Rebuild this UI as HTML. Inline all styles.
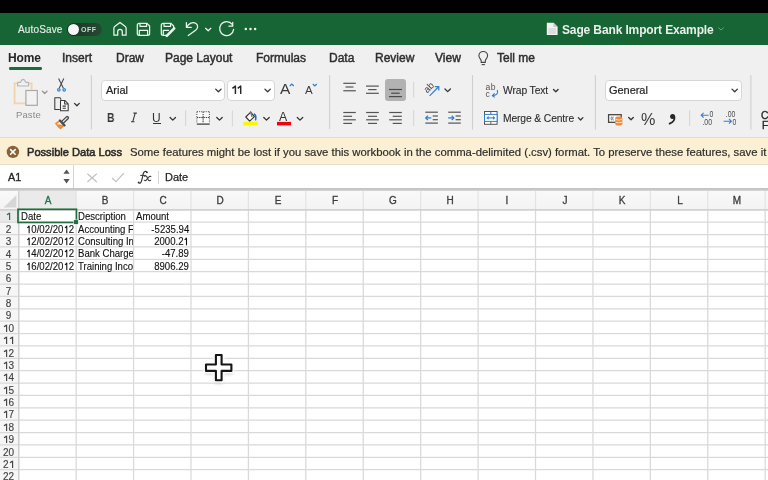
<!DOCTYPE html><html><head><meta charset="utf-8"><style>
*{margin:0;padding:0;box-sizing:border-box}
html,body{width:768px;height:480px;overflow:hidden;background:#fff;font-family:"Liberation Sans", sans-serif}
.a{position:absolute}
.t{position:absolute;white-space:nowrap;line-height:1;will-change:transform}
svg{position:absolute;overflow:visible}
</style></head><body>
<div class="a" style="left:0px;top:0px;width:768px;height:13px;background:#000;"></div><div class="a" style="left:0px;top:13px;width:768px;height:32px;background:#176534;"></div><div class="t" style="left:18.00px;top:24.93px;font-size:10px;color:#e4ece6;font-weight:400;letter-spacing:0.15px;-webkit-text-stroke:0.15px #e4ece6">AutoSave</div><div class="a" style="left:67px;top:23px;width:35px;height:12.5px;border-radius:6.5px;background:linear-gradient(90deg,#1a3324,#244a33)"></div><div class="a" style="left:67.7px;top:23.8px;width:11px;height:11px;border-radius:50%;background:#f6f6f6;box-shadow:0 0.5px 1px rgba(0,0,0,.4)"></div><div class="t" style="left:81.20px;top:25.77px;font-size:7px;color:#cfd8d2;font-weight:700;letter-spacing:0.5px;">OFF</div><svg width="768" height="480" style="left:0;top:0" viewBox="0 0 768 480"><g fill="none" stroke="#eef3ef" stroke-width="1.25" stroke-linejoin="round" stroke-linecap="round">
<path d="M113.9,35.2 V28.2 Q113.9,27.2 114.7,26.5 L120,22.4 L125.3,26.5 Q126.1,27.2 126.1,28.2 V35.2 H122.3 V31.6 A2.3,2.3 0 0 0 117.7,31.6 V35.2 Z"/>
<path d="M139.2,23.4 H147 L149.6,26 V33.4 Q149.6,35.3 147.7,35.3 H139.2 Q137.3,35.3 137.3,33.4 V25.3 Q137.3,23.4 139.2,23.4 Z"/>
<path d="M140,23.6 V26.3 H146.6 V23.6"/>
<path d="M139.3,35.2 V30.4 H147.6 V35.2"/>
<path d="M163.2,23.4 H171 L173.6,26 V27.5 M167,35.3 H163.2 Q161.3,35.3 161.3,33.4 V25.3 Q161.3,23.4 163.2,23.4"/>
<path d="M164,23.6 V26.3 H170.6 V23.6"/>
<path d="M163.3,35.2 V30.4 H168.5"/>
<path d="M186.4,22.6 V27.4 H191.2"/>
<path d="M186.6,27.3 C188.5,23.3 193,21.6 196,23.6 C198.6,25.6 197.8,28.4 195.6,30.2 L188.3,35.6"/>
<path d="M205.6,28.3 L208.2,30.8 L210.8,28.3"/>
<path d="M232.2,24.4 A7,7 0 1 0 233.6,29.4"/>
<path d="M232.7,22.3 V26.2 H228.9"/>
</g>
<path d="M166.8,35.8 L174.2,28.4" stroke="#eef3ef" stroke-width="2.6" stroke-linecap="round"/>
<g fill="#eef3ef"><circle cx="245.8" cy="29.1" r="1.25"/><circle cx="250.5" cy="29.1" r="1.25"/><circle cx="255.1" cy="29.1" r="1.25"/></g>
</svg><svg width="768" height="480" style="left:0;top:0" viewBox="0 0 768 480"><path d="M546.8,22.8 H553.6 L557.6,26.8 V35 H546.8 Z" fill="#f2f2f2"/><path d="M553.4,22.8 V27 H557.6" fill="#c9c9c9"/>
<g stroke="#b0b0b0" stroke-width="0.6"><path d="M548.5,29 H556 M548.5,31 H556 M548.5,33 H556"/></g>
<path d="M718.3,27.6 L721,30 L723.7,27.6" fill="none" stroke="#6f9c7d" stroke-width="1"/></svg><div class="t" style="left:562.20px;top:23.84px;font-size:12px;color:#eaf0ec;font-weight:700;letter-spacing:-0.13px;">Sage Bank Import Example</div><div class="a" style="left:0px;top:45px;width:768px;height:92px;background:#f0f0f0;"></div><div class="t" style="left:8.30px;top:51.54px;font-size:12px;color:#262626;font-weight:700;letter-spacing:-0.1px;">Home</div><div class="t" style="left:61.80px;top:51.54px;font-size:12px;color:#2e2e2e;font-weight:400;letter-spacing:0px;-webkit-text-stroke:0.45px #2e2e2e">Insert</div><div class="t" style="left:115.70px;top:51.54px;font-size:12px;color:#2e2e2e;font-weight:400;letter-spacing:0px;-webkit-text-stroke:0.45px #2e2e2e">Draw</div><div class="t" style="left:165.10px;top:51.54px;font-size:12px;color:#2e2e2e;font-weight:400;letter-spacing:0px;-webkit-text-stroke:0.45px #2e2e2e">Page Layout</div><div class="t" style="left:255.60px;top:51.54px;font-size:12px;color:#2e2e2e;font-weight:400;letter-spacing:0px;-webkit-text-stroke:0.45px #2e2e2e">Formulas</div><div class="t" style="left:328.70px;top:51.54px;font-size:12px;color:#2e2e2e;font-weight:400;letter-spacing:0px;-webkit-text-stroke:0.45px #2e2e2e">Data</div><div class="t" style="left:374.70px;top:51.54px;font-size:12px;color:#2e2e2e;font-weight:400;letter-spacing:0px;-webkit-text-stroke:0.45px #2e2e2e">Review</div><div class="t" style="left:435.30px;top:51.54px;font-size:12px;color:#2e2e2e;font-weight:400;letter-spacing:0px;-webkit-text-stroke:0.45px #2e2e2e">View</div><div class="t" style="left:496.60px;top:51.54px;font-size:12px;color:#2e2e2e;font-weight:400;letter-spacing:0px;-webkit-text-stroke:0.45px #2e2e2e">Tell me</div><div class="a" style="left:9px;top:67px;width:33px;height:2.6px;background:#1d6b3a;border-radius:1.3px"></div><svg width="768" height="480" style="left:0;top:0" viewBox="0 0 768 480"><g fill="none" stroke="#444" stroke-width="1.1"><path d="M481.2,62.4 V60.8 C481.2,59.2 478.9,58.2 478.9,55.8 A4.35,4.35 0 0 1 487.6,55.8 C487.6,58.2 485.3,59.2 485.3,60.8 V62.4 Z"/><path d="M481.6,64.6 H484.9"/></g></svg><svg width="768" height="480" style="left:0;top:0" viewBox="0 0 768 480"><path d="M91.4,75 V129.2" stroke="#cfcfcf" stroke-width="1.1"/><path d="M329.6,75 V129" stroke="#cfcfcf" stroke-width="1.1"/><path d="M472.5,75 V129.6" stroke="#cfcfcf" stroke-width="1.1"/><path d="M595.4,75 V129.5" stroke="#cfcfcf" stroke-width="1.1"/><path d="M750.9,75 V129.4" stroke="#cfcfcf" stroke-width="1.1"/></svg><svg width="768" height="480" style="left:0;top:0" viewBox="0 0 768 480"><path d="M185.6,110.3 V126.1" stroke="#d6d6d6" stroke-width="1.1"/><path d="M232.4,110.3 V126.2" stroke="#d6d6d6" stroke-width="1.1"/><path d="M413.6,81.8 V97.4" stroke="#d6d6d6" stroke-width="1.1"/><path d="M413.6,110.3 V126" stroke="#d6d6d6" stroke-width="1.1"/><path d="M689.6,110.3 V126" stroke="#d6d6d6" stroke-width="1.1"/></svg><svg width="768" height="480" style="left:0;top:0" viewBox="0 0 768 480"><g fill="none">
<path d="M17.4,83.4 H14.6 V103.4 H25.5" stroke="#f6d3a6" stroke-width="1.8"/>
<path d="M28.8,83.4 H31.6 V89.6" stroke="#f6d3a6" stroke-width="1.8"/>
<path d="M17.6,86 V82.8 Q17.6,82.4 18.2,82.4 H20.4 Q21.6,79.4 23.1,79.4 Q24.6,79.4 25.8,82.4 H28 Q28.6,82.4 28.6,82.8 V86 Z" stroke="#b5b5b5" stroke-width="1.1" fill="#efefef"/>
<rect x="25.9" y="90.5" width="11.4" height="14.8" stroke="#a8a8a8" stroke-width="1.2" fill="#f2f2f2"/>
<path d="M42.4,91.2 L44.7,93.4 L47,91.2" stroke="#999" stroke-width="1.4" stroke-linecap="round" stroke-linejoin="round"/>
</g></svg><div class="t" style="left:16.20px;top:110.36px;font-size:9.5px;color:#8a8a8a;font-weight:400;letter-spacing:0.1px;">Paste</div><svg width="768" height="480" style="left:0;top:0" viewBox="0 0 768 480"><g fill="none" stroke-width="1.05">
<path d="M58.6,78.6 L63.4,88.2 M63.8,78.6 L59.2,88.2" stroke="#444"/>
</g>
<circle cx="58.8" cy="89.8" r="1.9" fill="#3a8ad6"/><circle cx="64.2" cy="89.8" r="1.9" fill="#3a8ad6"/>
<circle cx="58.8" cy="89.8" r="0.6" fill="#dfeefa"/><circle cx="64.2" cy="89.8" r="0.6" fill="#dfeefa"/>
<g fill="none" stroke="#3a3a3a" stroke-width="1.05" stroke-linejoin="round">
<path d="M59.8,109.4 H54.8 V97.8 H59.6 Q60.8,97.8 60.8,99 V99.8"/>
<path d="M60.5,100.4 H64.8 L68.2,103.8 V110.8 H60.5 Z" fill="#f7f7f7"/>
<path d="M64.6,100.6 V104 H68"/>
<path d="M62.6,106.1 H65.9 M62.6,108.3 H65.9"/>
</g>
<path d="M74.5,103.4 L76.9,105.8 L79.3,103.4" fill="none" stroke="#333" stroke-width="1.3" stroke-linecap="round" stroke-linejoin="round"/>
<path d="M60.4,119.6 L65.4,124.8 L60.6,129.6 Q57.2,127.2 54.8,123.2 Z" fill="#f08a3c"/>
<path d="M60.2,121.2 L63.6,124.8 L56.8,124.2 Z" fill="#fbfbfb"/>
<path d="M59.8,120.4 L64.6,125.4" stroke="#4a4a4a" stroke-width="2.1" stroke-linecap="round"/>
<path d="M63,121.8 L67.2,117.8" stroke="#4a4a4a" stroke-width="3.8" stroke-linecap="round"/>
<path d="M63.3,121.5 L67.1,117.9" stroke="#e8e8e8" stroke-width="1.3" stroke-linecap="round"/>
</svg><div class="a" style="left:100.5px;top:79.5px;width:124px;height:21px;background:#fff;border:1px solid #d6d6d6;border-radius:4px"></div><div class="t" style="left:106.00px;top:84.69px;font-size:11px;color:#262626;font-weight:400;letter-spacing:0px;-webkit-text-stroke:0.2px #262626">Arial</div><div class="a" style="left:227px;top:79.5px;width:47.5px;height:21px;background:#fff;border:1px solid #d6d6d6;border-radius:4px"></div><svg width="768" height="480" style="left:0;top:0" viewBox="0 0 768 480"><path d="M232.4,88.4 L235.4,86.1 V94 M237.7,88.4 L240.7,86.1 V94" fill="none" stroke="#262626" stroke-width="1.45" stroke-linejoin="round"/></svg><svg width="768" height="480" style="left:0;top:0" viewBox="0 0 768 480"><path d="M215.70000000000002,89.10000000000001 L218.4,91.7 L221.1,89.10000000000001" fill="none" stroke="#333" stroke-width="1.3" stroke-linecap="round" stroke-linejoin="round"/></svg><svg width="768" height="480" style="left:0;top:0" viewBox="0 0 768 480"><path d="M264.90000000000003,89.10000000000001 L267.6,91.7 L270.3,89.10000000000001" fill="none" stroke="#333" stroke-width="1.3" stroke-linecap="round" stroke-linejoin="round"/></svg><div class="t" style="left:280.00px;top:81.48px;font-size:15.5px;color:#3a3a3a;font-weight:400;letter-spacing:0px;">A</div><div class="t" style="left:304.60px;top:84.87px;font-size:11.5px;color:#3a3a3a;font-weight:400;letter-spacing:0px;">A</div><svg width="768" height="480" style="left:0;top:0" viewBox="0 0 768 480"><path d="M289.8,86 L291.8,84 L293.8,86" fill="none" stroke="#2f7fd0" stroke-width="1.2"/><path d="M312.8,84 L314.8,86 L316.8,84" fill="none" stroke="#2f7fd0" stroke-width="1.2"/></svg><div class="t" style="left:107.40px;top:111.10px;font-size:13px;color:#333;font-weight:700;letter-spacing:0px;transform:scaleX(0.8);transform-origin:0 0">B</div><svg width="768" height="480" style="left:0;top:0" viewBox="0 0 768 480"><path d="M133.4,113.1 H136.9 M131,121.8 H134.5 M135.2,113.1 L132.7,121.8" stroke="#3a3a3a" stroke-width="1.1" fill="none"/></svg><div class="t" style="left:152.00px;top:112.04px;font-size:12px;color:#333;font-weight:400;letter-spacing:0px;">U</div><div class="a" style="left:152.5px;top:123px;width:8px;height:1px;background:#333;"></div><svg width="768" height="480" style="left:0;top:0" viewBox="0 0 768 480"><path d="M170.10000000000002,117.5 L172.8,120.1 L175.5,117.5" fill="none" stroke="#333" stroke-width="1.3" stroke-linecap="round" stroke-linejoin="round"/></svg><svg width="768" height="480" style="left:0;top:0" viewBox="0 0 768 480"><rect x="196.8" y="111.5" width="12.6" height="11.6" fill="#fafafa"/>
<g fill="none" stroke="#555" stroke-width="1" stroke-dasharray="1.1 1.1">
<path d="M196.9,111.7 H209.4 M196.9,111.7 V123 M209.4,111.7 V123"/></g><path d="M203.1,111.7 V123 M196.9,117.5 H209.4" stroke="#444" stroke-width="1.05" stroke-dasharray="1.4 0.8" fill="none"/>
<path d="M196.8,124.1 H209.7" stroke="#444" stroke-width="1.3"/></svg><svg width="768" height="480" style="left:0;top:0" viewBox="0 0 768 480"><path d="M216.8,117.5 L219.5,120.1 L222.2,117.5" fill="none" stroke="#333" stroke-width="1.3" stroke-linecap="round" stroke-linejoin="round"/></svg><svg width="768" height="480" style="left:0;top:0" viewBox="0 0 768 480"><path d="M245.8,117 L250.7,112.2 L254.4,116.6 L249.7,121.2 Z" fill="#fff" stroke="#333" stroke-width="1.15" stroke-linejoin="round"/>
<path d="M250.6,111.9 L251.9,116.2" stroke="#777" stroke-width="1.5" stroke-linecap="round"/>
<path d="M254.4,114.2 Q256.4,115.2 255.6,119.8" fill="none" stroke="#1f6fc0" stroke-width="1.6" stroke-linecap="round"/>
<rect x="243.3" y="121.9" width="14.6" height="3.5" fill="#f8f800"/>
<rect x="277" y="121.9" width="14" height="3.5" fill="#f0000c"/></svg><svg width="768" height="480" style="left:0;top:0" viewBox="0 0 768 480"><path d="M263.8,117.5 L266.5,120.1 L269.2,117.5" fill="none" stroke="#333" stroke-width="1.3" stroke-linecap="round" stroke-linejoin="round"/></svg><div class="t" style="left:279.40px;top:110.89px;font-size:12.3px;color:#333;font-weight:400;letter-spacing:0px;">A</div><svg width="768" height="480" style="left:0;top:0" viewBox="0 0 768 480"><path d="M297.3,117.5 L300,120.1 L302.7,117.5" fill="none" stroke="#333" stroke-width="1.3" stroke-linecap="round" stroke-linejoin="round"/></svg><div class="a" style="left:385px;top:79.4px;width:21px;height:21.3px;background:#b2b2b2;border-radius:3px"></div><svg width="768" height="480" style="left:0;top:0" viewBox="0 0 768 480"><path d="M343.3,83.3 H355.8" stroke="#555" stroke-width="1.2"/></svg><svg width="768" height="480" style="left:0;top:0" viewBox="0 0 768 480"><path d="M345.5,87 H353.5" stroke="#555" stroke-width="1.2"/></svg><svg width="768" height="480" style="left:0;top:0" viewBox="0 0 768 480"><path d="M343.3,90.75 H355.8" stroke="#555" stroke-width="1.2"/></svg><svg width="768" height="480" style="left:0;top:0" viewBox="0 0 768 480"><path d="M366,86.1 H378.8" stroke="#555" stroke-width="1.2"/></svg><svg width="768" height="480" style="left:0;top:0" viewBox="0 0 768 480"><path d="M368.2,89.6 H376.6" stroke="#555" stroke-width="1.2"/></svg><svg width="768" height="480" style="left:0;top:0" viewBox="0 0 768 480"><path d="M366,93.3 H378.8" stroke="#555" stroke-width="1.2"/></svg><svg width="768" height="480" style="left:0;top:0" viewBox="0 0 768 480"><path d="M389,89.5 H401.9" stroke="#4a4a4a" stroke-width="1.2"/></svg><svg width="768" height="480" style="left:0;top:0" viewBox="0 0 768 480"><path d="M391.2,93.2 H399.7" stroke="#4a4a4a" stroke-width="1.2"/></svg><svg width="768" height="480" style="left:0;top:0" viewBox="0 0 768 480"><path d="M389,96.6 H401.9" stroke="#4a4a4a" stroke-width="1.2"/></svg><svg width="768" height="480" style="left:0;top:0" viewBox="0 0 768 480"><path d="M343.3,112.5 H355.8" stroke="#555" stroke-width="1.2"/></svg><svg width="768" height="480" style="left:0;top:0" viewBox="0 0 768 480"><path d="M366.1,112.5 H378.8" stroke="#555" stroke-width="1.2"/></svg><svg width="768" height="480" style="left:0;top:0" viewBox="0 0 768 480"><path d="M389.2,112.5 H401.8" stroke="#555" stroke-width="1.2"/></svg><svg width="768" height="480" style="left:0;top:0" viewBox="0 0 768 480"><path d="M343.3,116.3 H352.1" stroke="#555" stroke-width="1.2"/></svg><svg width="768" height="480" style="left:0;top:0" viewBox="0 0 768 480"><path d="M368,116.3 H377" stroke="#555" stroke-width="1.2"/></svg><svg width="768" height="480" style="left:0;top:0" viewBox="0 0 768 480"><path d="M392.7,116.3 H401.8" stroke="#555" stroke-width="1.2"/></svg><svg width="768" height="480" style="left:0;top:0" viewBox="0 0 768 480"><path d="M343.3,119.8 H355.8" stroke="#555" stroke-width="1.2"/></svg><svg width="768" height="480" style="left:0;top:0" viewBox="0 0 768 480"><path d="M366.1,119.8 H378.8" stroke="#555" stroke-width="1.2"/></svg><svg width="768" height="480" style="left:0;top:0" viewBox="0 0 768 480"><path d="M389.2,119.8 H401.8" stroke="#555" stroke-width="1.2"/></svg><svg width="768" height="480" style="left:0;top:0" viewBox="0 0 768 480"><path d="M343.3,123.4 H352.1" stroke="#555" stroke-width="1.2"/></svg><svg width="768" height="480" style="left:0;top:0" viewBox="0 0 768 480"><path d="M368,123.4 H377" stroke="#555" stroke-width="1.2"/></svg><svg width="768" height="480" style="left:0;top:0" viewBox="0 0 768 480"><path d="M392.7,123.4 H401.8" stroke="#555" stroke-width="1.2"/></svg><svg width="768" height="480" style="left:0;top:0" viewBox="0 0 768 480"><g transform="translate(428.6,87.6) rotate(-45)"><text x="-5.2" y="3.2" font-family="Liberation Sans" font-size="9.6" fill="#444">ab</text></g>
<path d="M429.6,95.8 L438.4,87" stroke="#2f7fd0" stroke-width="1.2"/><path d="M434.8,86.6 H438.8 V90.6" fill="none" stroke="#2f7fd0" stroke-width="1.2"/></svg><svg width="768" height="480" style="left:0;top:0" viewBox="0 0 768 480"><path d="M445.0,89.0 L447.7,91.6 L450.4,89.0" fill="none" stroke="#333" stroke-width="1.3" stroke-linecap="round" stroke-linejoin="round"/></svg><svg width="768" height="480" style="left:0;top:0" viewBox="0 0 768 480"><path d="M425.3,112.2 H437.90000000000003" stroke="#555" stroke-width="1.2"/></svg><svg width="768" height="480" style="left:0;top:0" viewBox="0 0 768 480"><path d="M425.3,123.1 H437.90000000000003" stroke="#555" stroke-width="1.2"/></svg><svg width="768" height="480" style="left:0;top:0" viewBox="0 0 768 480"><path d="M432.7,116 H437.90000000000003" stroke="#555" stroke-width="1.2"/></svg><svg width="768" height="480" style="left:0;top:0" viewBox="0 0 768 480"><path d="M432.7,119.7 H437.90000000000003" stroke="#555" stroke-width="1.2"/></svg><svg width="768" height="480" style="left:0;top:0" viewBox="0 0 768 480"><path d="M425.8,117.9 H431.3" stroke="#2f7fd0" stroke-width="1.3"/><path d="M427.90000000000003,115.8 L425.8,117.9 L427.90000000000003,120" fill="none" stroke="#2f7fd0" stroke-width="1.3"/></svg><svg width="768" height="480" style="left:0;top:0" viewBox="0 0 768 480"><path d="M448.2,112.2 H460.8" stroke="#555" stroke-width="1.2"/></svg><svg width="768" height="480" style="left:0;top:0" viewBox="0 0 768 480"><path d="M448.2,123.1 H460.8" stroke="#555" stroke-width="1.2"/></svg><svg width="768" height="480" style="left:0;top:0" viewBox="0 0 768 480"><path d="M455.59999999999997,116 H460.8" stroke="#555" stroke-width="1.2"/></svg><svg width="768" height="480" style="left:0;top:0" viewBox="0 0 768 480"><path d="M455.59999999999997,119.7 H460.8" stroke="#555" stroke-width="1.2"/></svg><svg width="768" height="480" style="left:0;top:0" viewBox="0 0 768 480"><path d="M448.2,117.9 H453.8" stroke="#2f7fd0" stroke-width="1.3"/><path d="M451.7,115.8 L453.8,117.9 L451.7,120" fill="none" stroke="#2f7fd0" stroke-width="1.3"/></svg><svg width="768" height="480" style="left:0;top:0" viewBox="0 0 768 480"><text x="485.6" y="90.2" font-family="Liberation Sans" font-size="8.6" fill="#555" letter-spacing="0.3">ab</text><text x="485.6" y="96.6" font-family="Liberation Sans" font-size="8.6" fill="#555">c</text>
<path d="M497.2,90 Q499.2,95 492.6,95.6" fill="none" stroke="#2f7fd0" stroke-width="1.15"/><path d="M494.6,93.4 L492.4,95.6 L494.8,97.4" fill="none" stroke="#2f7fd0" stroke-width="1.15"/></svg><div class="t" style="left:503.30px;top:85.88px;font-size:10.3px;color:#2a2a2a;font-weight:400;letter-spacing:-0.1px;-webkit-text-stroke:0.1px #2a2a2a">Wrap Text</div><svg width="768" height="480" style="left:0;top:0" viewBox="0 0 768 480"><path d="M553.5,89.44999999999999 L555.8,91.75 L558.0999999999999,89.44999999999999" fill="none" stroke="#333" stroke-width="1.3" stroke-linecap="round" stroke-linejoin="round"/></svg><svg width="768" height="480" style="left:0;top:0" viewBox="0 0 768 480"><rect x="484.5" y="111.5" width="12.6" height="12.8" fill="#fff" stroke="#555" stroke-width="1"/>
<path d="M490.8,111.5 V114.4 M490.8,121.4 V124.3" stroke="#555" stroke-width="0.9"/>
<rect x="484.5" y="114.4" width="12.6" height="7" fill="#fff" stroke="#2f7fd0" stroke-width="1"/>
<path d="M488,117.9 H493.6" stroke="#2f7fd0" stroke-width="1.1"/><path d="M486.2,117.9 L488.6,116 V119.8 Z M495.4,117.9 L493,116 V119.8 Z" fill="#2f7fd0"/></svg><div class="t" style="left:503.30px;top:113.88px;font-size:10.3px;color:#2a2a2a;font-weight:400;letter-spacing:-0.12px;-webkit-text-stroke:0.1px #2a2a2a">Merge &amp; Centre</div><svg width="768" height="480" style="left:0;top:0" viewBox="0 0 768 480"><path d="M578.3000000000001,117.64999999999999 L580.6,119.95 L582.9,117.64999999999999" fill="none" stroke="#333" stroke-width="1.3" stroke-linecap="round" stroke-linejoin="round"/></svg><div class="a" style="left:604.5px;top:79.8px;width:137px;height:20.8px;background:#fff;border:1px solid #d6d6d6;border-radius:4px"></div><div class="t" style="left:609.20px;top:84.69px;font-size:11px;color:#262626;font-weight:400;letter-spacing:-0.05px;-webkit-text-stroke:0.2px #262626">General</div><svg width="768" height="480" style="left:0;top:0" viewBox="0 0 768 480"><path d="M732.0,89.10000000000001 L734.7,91.7 L737.4000000000001,89.10000000000001" fill="none" stroke="#333" stroke-width="1.3" stroke-linecap="round" stroke-linejoin="round"/></svg><svg width="768" height="480" style="left:0;top:0" viewBox="0 0 768 480"><rect x="608.6" y="114.7" width="12.6" height="7.6" fill="#fff" stroke="#444" stroke-width="1.3"/>
<path d="M611.6,116.6 Q610.6,118.5 611.6,120.4 M613.2,116.6 Q612.2,118.5 613.2,120.4" fill="none" stroke="#555" stroke-width="0.8"/>
<rect x="615.2" y="116.4" width="7.2" height="9" rx="2.2" fill="#f08a3c"/>
<path d="M615.6,119.4 Q618.8,120.6 622,119.4 M615.6,122.2 Q618.8,123.4 622,122.2" fill="none" stroke="#fff" stroke-width="0.7"/></svg><svg width="768" height="480" style="left:0;top:0" viewBox="0 0 768 480"><path d="M628.7,117.44999999999999 L631,119.75 L633.3,117.44999999999999" fill="none" stroke="#333" stroke-width="1.3" stroke-linecap="round" stroke-linejoin="round"/></svg><div class="t" style="left:641.40px;top:111.19px;font-size:16.2px;color:#3a3a3a;font-weight:400;letter-spacing:0px;">%</div><svg width="768" height="480" style="left:0;top:0" viewBox="0 0 768 480"><circle cx="672.6" cy="116.4" r="2.5" fill="#262626"/><path d="M674.4,117 Q675.2,121.4 669.6,123.6" fill="none" stroke="#262626" stroke-width="1.8" stroke-linecap="round"/></svg><svg width="768" height="480" style="left:0;top:0" viewBox="0 0 768 480"><g font-family="Liberation Sans" font-size="9.6" fill="#4a4a4a">
<text transform="translate(709.6,117.2) scale(0.72,1)">0</text><text transform="translate(702.4,124.6) scale(0.72,1)">.00</text>
<text transform="translate(725.8,117.2) scale(0.72,1)">.00</text><text transform="translate(732.6,124.6) scale(0.72,1)">0</text></g>
<path d="M701.2,115.2 H708.6 M703.6,112.8 L701.2,115.2 L703.6,117.6" fill="none" stroke="#2f7fd0" stroke-width="1.1"/>
<path d="M723.6,121.2 H731.4 M729,118.8 L731.4,121.2 L729,123.6" fill="none" stroke="#2f7fd0" stroke-width="1.1"/></svg><div class="t" style="left:761.00px;top:110.88px;font-size:10.3px;color:#2a2a2a;font-weight:400;letter-spacing:0px;-webkit-text-stroke:0.35px #2a2a2a">C</div><div class="t" style="left:761.60px;top:121.48px;font-size:10.3px;color:#2a2a2a;font-weight:400;letter-spacing:0px;-webkit-text-stroke:0.35px #2a2a2a">F</div><div class="a" style="left:0px;top:137px;width:768px;height:28px;background:#fbf0d4;"></div><div class="a" style="left:0px;top:137px;width:768px;height:1px;background:#e6dcc6;"></div><div class="a" style="left:0px;top:164px;width:768px;height:1px;background:#e9dfc9;"></div><svg width="768" height="480" style="left:0;top:0" viewBox="0 0 768 480"><circle cx="12.9" cy="151.9" r="6.2" fill="#8b6239"/><path d="M10.6,149.6 L15.2,154.2 M15.2,149.6 L10.6,154.2" stroke="#fff" stroke-width="1.5" stroke-linecap="round"/></svg><div class="t" style="left:26.80px;top:147.10px;font-size:11.1px;color:#2a2a2a;font-weight:400;letter-spacing:0px;-webkit-text-stroke:0.55px #2a2a2a">Possible Data Loss</div><div class="t" style="left:130.00px;top:146.91px;font-size:11.33px;color:#2e2e2e;font-weight:400;letter-spacing:0px;-webkit-text-stroke:0.2px #2e2e2e">Some features might be lost if you save this workbook in the comma-delimited (.csv) format. To preserve these features, save it in an Excel file format.</div><div class="a" style="left:0px;top:165px;width:768px;height:23px;background:#fff;"></div><div class="a" style="left:73px;top:165px;width:1px;height:23px;background:#d4d4d4;"></div><div class="t" style="left:8.00px;top:171.86px;font-size:10.8px;color:#262626;font-weight:400;letter-spacing:0px;-webkit-text-stroke:0.35px #262626">A1</div><svg width="768" height="480" style="left:0;top:0" viewBox="0 0 768 480"><path d="M63.4,173.8 L66.55,169.4 L69.7,173.8 Z M63.4,179 L66.55,183.5 L69.7,179 Z" fill="#555"/></svg><svg width="768" height="480" style="left:0;top:0" viewBox="0 0 768 480"><path d="M87.4,173.8 L96.8,182 M96.8,173.8 L87.4,182" stroke="#c2c2c2" stroke-width="1.2"/>
<path d="M112,178 L116,181.6 L123.8,173.2" fill="none" stroke="#c2c2c2" stroke-width="1.2"/>
<g fill="none" stroke="#333" stroke-linecap="round">
<path d="M146.9,172.2 C146.2,170.9 144.2,170.9 143.5,173 C142.8,175.4 142.2,179.2 141.3,181.6 C140.7,183.3 139.3,183.6 138.5,182.6" stroke-width="1.15"/>
<path d="M140.6,175.4 H145.4" stroke-width="1"/>
<path d="M144.6,176.3 Q146.3,175.4 147.1,177.3 L148.2,179.7 Q149,181.3 150.6,180.3" stroke-width="1.05"/>
<path d="M150.9,176.4 Q149.7,175.9 148.4,177.5 L146.5,179.9 Q145.5,181.2 144.3,180.4" stroke-width="1.05"/>
</g>
<circle cx="146.9" cy="172.3" r="0.9" fill="#333"/><circle cx="138.6" cy="182.4" r="0.9" fill="#333"/></svg><div class="a" style="left:158px;top:171.3px;width:1px;height:12.4px;background:#d6d6d6;"></div><div class="t" style="left:165.20px;top:171.99px;font-size:11px;color:#262626;font-weight:400;letter-spacing:0px;-webkit-text-stroke:0.25px #262626">Date</div><div class="a" style="left:0px;top:188px;width:768px;height:3px;background:linear-gradient(#c3c3c3,#c9c9c9 65%,#dedede);"></div><div class="a" style="left:0px;top:191px;width:768px;height:19px;background:linear-gradient(#f9f9f9,#f3f3f3);"></div><div class="a" style="left:0px;top:209px;width:19px;height:271px;background:#f6f6f6;"></div><div class="a" style="left:18.73px;top:191px;width:57.42px;height:19px;background:#eaeaea"></div><div class="a" style="left:0;top:209.80px;width:18.73px;height:12.375px;background:#eaeaea"></div><div class="a" style="left:19.23px;top:210.30px;width:749.27px;height:270.20px;background:#fff"></div><svg width="768" height="480" style="left:0;top:0" viewBox="0 0 768 480"><g stroke="#e3e3e3" stroke-width="1.2"><path d="M76.15,191 V209.80"/><path d="M133.57,191 V209.80"/><path d="M190.99,191 V209.80"/><path d="M248.41,191 V209.80"/><path d="M305.83,191 V209.80"/><path d="M363.25,191 V209.80"/><path d="M420.67,191 V209.80"/><path d="M478.09,191 V209.80"/><path d="M535.51,191 V209.80"/><path d="M592.93,191 V209.80"/><path d="M650.35,191 V209.80"/><path d="M707.77,191 V209.80"/><path d="M765.19,191 V209.80"/></g></svg><svg width="768" height="480" style="left:0;top:0" viewBox="0 0 768 480"><g stroke="#d9d9d9" stroke-width="1.25"><path d="M18.73,209.80 V480"/><path d="M76.15,209.80 V480"/><path d="M133.57,209.80 V480"/><path d="M190.99,209.80 V480"/><path d="M248.41,209.80 V480"/><path d="M305.83,209.80 V480"/><path d="M363.25,209.80 V480"/><path d="M420.67,209.80 V480"/><path d="M478.09,209.80 V480"/><path d="M535.51,209.80 V480"/><path d="M592.93,209.80 V480"/><path d="M650.35,209.80 V480"/><path d="M707.77,209.80 V480"/><path d="M765.19,209.80 V480"/><path d="M0,209.80 H768"/><path d="M0,222.18 H768"/><path d="M0,234.55 H768"/><path d="M0,246.93 H768"/><path d="M0,259.30 H768"/><path d="M0,271.68 H768"/><path d="M0,284.05 H768"/><path d="M0,296.43 H768"/><path d="M0,308.80 H768"/><path d="M0,321.18 H768"/><path d="M0,333.55 H768"/><path d="M0,345.93 H768"/><path d="M0,358.30 H768"/><path d="M0,370.68 H768"/><path d="M0,383.05 H768"/><path d="M0,395.43 H768"/><path d="M0,407.80 H768"/><path d="M0,420.18 H768"/><path d="M0,432.55 H768"/><path d="M0,444.93 H768"/><path d="M0,457.30 H768"/><path d="M0,469.68 H768"/><path d="M0,482.05 H768"/></g></svg><svg width="768" height="480" style="left:0;top:0" viewBox="0 0 768 480"><path d="M0,209.80 H768" stroke="#cdcdcd" stroke-width="1.3"/></svg><svg width="768" height="480" style="left:0;top:0" viewBox="0 0 768 480"><path d="M18.73,191 V209.80" stroke="#cccccc" stroke-width="1.25"/></svg><svg width="768" height="480" style="left:0;top:0" viewBox="0 0 768 480"><path d="M18.73,209.80 V222.18" stroke="#cfcfcf" stroke-width="1.25"/><path d="M18.73,222.18 V234.55" stroke="#cfcfcf" stroke-width="1.25"/><path d="M18.73,234.55 V246.93" stroke="#cfcfcf" stroke-width="1.25"/><path d="M18.73,246.93 V259.30" stroke="#cfcfcf" stroke-width="1.25"/><path d="M18.73,259.30 V271.68" stroke="#cfcfcf" stroke-width="1.25"/><path d="M18.73,271.68 V284.05" stroke="#cfcfcf" stroke-width="1.25"/><path d="M18.73,284.05 V296.43" stroke="#cfcfcf" stroke-width="1.25"/><path d="M18.73,296.43 V308.80" stroke="#cfcfcf" stroke-width="1.25"/><path d="M18.73,308.80 V321.18" stroke="#cfcfcf" stroke-width="1.25"/><path d="M18.73,321.18 V333.55" stroke="#cfcfcf" stroke-width="1.25"/><path d="M18.73,333.55 V345.93" stroke="#cfcfcf" stroke-width="1.25"/><path d="M18.73,345.93 V358.30" stroke="#cfcfcf" stroke-width="1.25"/><path d="M18.73,358.30 V370.68" stroke="#cfcfcf" stroke-width="1.25"/><path d="M18.73,370.68 V383.05" stroke="#cfcfcf" stroke-width="1.25"/><path d="M18.73,383.05 V395.43" stroke="#cfcfcf" stroke-width="1.25"/><path d="M18.73,395.43 V407.80" stroke="#cfcfcf" stroke-width="1.25"/><path d="M18.73,407.80 V420.18" stroke="#cfcfcf" stroke-width="1.25"/><path d="M18.73,420.18 V432.55" stroke="#cfcfcf" stroke-width="1.25"/><path d="M18.73,432.55 V444.93" stroke="#cfcfcf" stroke-width="1.25"/><path d="M18.73,444.93 V457.30" stroke="#cfcfcf" stroke-width="1.25"/><path d="M18.73,457.30 V469.68" stroke="#cfcfcf" stroke-width="1.25"/><path d="M18.73,469.68 V482.05" stroke="#cfcfcf" stroke-width="1.25"/><path d="M18.73,482.05 V494.43" stroke="#cfcfcf" stroke-width="1.25"/></svg><svg width="768" height="480" style="left:0;top:0" viewBox="0 0 768 480"><path d="M16.4,195 V207.5 H3.6 Z" fill="#d6d6d6"/></svg><div class="t" style="left:28.04px;width:40px;text-align:center;top:196.44px;font-size:10px;color:#217346;-webkit-text-stroke:0.3px #217346">A</div><div class="t" style="left:85.46px;width:40px;text-align:center;top:196.44px;font-size:10px;color:#3c3c3c;-webkit-text-stroke:0.3px #3c3c3c">B</div><div class="t" style="left:142.88px;width:40px;text-align:center;top:196.44px;font-size:10px;color:#3c3c3c;-webkit-text-stroke:0.3px #3c3c3c">C</div><div class="t" style="left:200.30px;width:40px;text-align:center;top:196.44px;font-size:10px;color:#3c3c3c;-webkit-text-stroke:0.3px #3c3c3c">D</div><div class="t" style="left:257.72px;width:40px;text-align:center;top:196.44px;font-size:10px;color:#3c3c3c;-webkit-text-stroke:0.3px #3c3c3c">E</div><div class="t" style="left:315.14px;width:40px;text-align:center;top:196.44px;font-size:10px;color:#3c3c3c;-webkit-text-stroke:0.3px #3c3c3c">F</div><div class="t" style="left:372.56px;width:40px;text-align:center;top:196.44px;font-size:10px;color:#3c3c3c;-webkit-text-stroke:0.3px #3c3c3c">G</div><div class="t" style="left:429.98px;width:40px;text-align:center;top:196.44px;font-size:10px;color:#3c3c3c;-webkit-text-stroke:0.3px #3c3c3c">H</div><div class="t" style="left:487.40px;width:40px;text-align:center;top:196.44px;font-size:10px;color:#3c3c3c;-webkit-text-stroke:0.3px #3c3c3c">I</div><div class="t" style="left:544.82px;width:40px;text-align:center;top:196.44px;font-size:10px;color:#3c3c3c;-webkit-text-stroke:0.3px #3c3c3c">J</div><div class="t" style="left:602.24px;width:40px;text-align:center;top:196.44px;font-size:10px;color:#3c3c3c;-webkit-text-stroke:0.3px #3c3c3c">K</div><div class="t" style="left:659.66px;width:40px;text-align:center;top:196.44px;font-size:10px;color:#3c3c3c;-webkit-text-stroke:0.3px #3c3c3c">L</div><div class="t" style="left:717.08px;width:40px;text-align:center;top:196.44px;font-size:10px;color:#3c3c3c;-webkit-text-stroke:0.3px #3c3c3c">M</div><div class="t" style="left:0;width:17px;text-align:center;top:212.44px;font-size:10px;color:#217346;-webkit-text-stroke:0.15px #217346"><span style="display:inline-block;position:relative;width:5.56px;height:8px"><svg width="6" height="8" style="left:0;top:0" viewBox="0 0 6 8"><path d="M0.9,2.6 Q2.6,2 3.5,0.8 M3.6,0.8 V8" fill="none" stroke="#217346" stroke-width="1.15"/></svg></span></div><div class="t" style="left:0;width:17px;text-align:center;top:224.81px;font-size:10px;color:#444;-webkit-text-stroke:0.15px #444">2</div><div class="t" style="left:0;width:17px;text-align:center;top:237.19px;font-size:10px;color:#444;-webkit-text-stroke:0.15px #444">3</div><div class="t" style="left:0;width:17px;text-align:center;top:249.56px;font-size:10px;color:#444;-webkit-text-stroke:0.15px #444">4</div><div class="t" style="left:0;width:17px;text-align:center;top:261.94px;font-size:10px;color:#444;-webkit-text-stroke:0.15px #444">5</div><div class="t" style="left:0;width:17px;text-align:center;top:274.31px;font-size:10px;color:#444;-webkit-text-stroke:0.15px #444">6</div><div class="t" style="left:0;width:17px;text-align:center;top:286.69px;font-size:10px;color:#444;-webkit-text-stroke:0.15px #444">7</div><div class="t" style="left:0;width:17px;text-align:center;top:299.06px;font-size:10px;color:#444;-webkit-text-stroke:0.15px #444">8</div><div class="t" style="left:0;width:17px;text-align:center;top:311.44px;font-size:10px;color:#444;-webkit-text-stroke:0.15px #444">9</div><div class="t" style="left:0;width:17px;text-align:center;top:323.81px;font-size:10px;color:#444;-webkit-text-stroke:0.15px #444"><span style="display:inline-block;position:relative;width:5.56px;height:8px"><svg width="6" height="8" style="left:0;top:0" viewBox="0 0 6 8"><path d="M0.9,2.6 Q2.6,2 3.5,0.8 M3.6,0.8 V8" fill="none" stroke="#444" stroke-width="1.15"/></svg></span>0</div><div class="t" style="left:0;width:17px;text-align:center;top:336.19px;font-size:10px;color:#444;-webkit-text-stroke:0.15px #444"><span style="display:inline-block;position:relative;width:5.56px;height:8px"><svg width="6" height="8" style="left:0;top:0" viewBox="0 0 6 8"><path d="M0.9,2.6 Q2.6,2 3.5,0.8 M3.6,0.8 V8" fill="none" stroke="#444" stroke-width="1.15"/></svg></span><span style="display:inline-block;position:relative;width:5.56px;height:8px"><svg width="6" height="8" style="left:0;top:0" viewBox="0 0 6 8"><path d="M0.9,2.6 Q2.6,2 3.5,0.8 M3.6,0.8 V8" fill="none" stroke="#444" stroke-width="1.15"/></svg></span></div><div class="t" style="left:0;width:17px;text-align:center;top:348.56px;font-size:10px;color:#444;-webkit-text-stroke:0.15px #444"><span style="display:inline-block;position:relative;width:5.56px;height:8px"><svg width="6" height="8" style="left:0;top:0" viewBox="0 0 6 8"><path d="M0.9,2.6 Q2.6,2 3.5,0.8 M3.6,0.8 V8" fill="none" stroke="#444" stroke-width="1.15"/></svg></span>2</div><div class="t" style="left:0;width:17px;text-align:center;top:360.94px;font-size:10px;color:#444;-webkit-text-stroke:0.15px #444"><span style="display:inline-block;position:relative;width:5.56px;height:8px"><svg width="6" height="8" style="left:0;top:0" viewBox="0 0 6 8"><path d="M0.9,2.6 Q2.6,2 3.5,0.8 M3.6,0.8 V8" fill="none" stroke="#444" stroke-width="1.15"/></svg></span>3</div><div class="t" style="left:0;width:17px;text-align:center;top:373.31px;font-size:10px;color:#444;-webkit-text-stroke:0.15px #444"><span style="display:inline-block;position:relative;width:5.56px;height:8px"><svg width="6" height="8" style="left:0;top:0" viewBox="0 0 6 8"><path d="M0.9,2.6 Q2.6,2 3.5,0.8 M3.6,0.8 V8" fill="none" stroke="#444" stroke-width="1.15"/></svg></span>4</div><div class="t" style="left:0;width:17px;text-align:center;top:385.69px;font-size:10px;color:#444;-webkit-text-stroke:0.15px #444"><span style="display:inline-block;position:relative;width:5.56px;height:8px"><svg width="6" height="8" style="left:0;top:0" viewBox="0 0 6 8"><path d="M0.9,2.6 Q2.6,2 3.5,0.8 M3.6,0.8 V8" fill="none" stroke="#444" stroke-width="1.15"/></svg></span>5</div><div class="t" style="left:0;width:17px;text-align:center;top:398.06px;font-size:10px;color:#444;-webkit-text-stroke:0.15px #444"><span style="display:inline-block;position:relative;width:5.56px;height:8px"><svg width="6" height="8" style="left:0;top:0" viewBox="0 0 6 8"><path d="M0.9,2.6 Q2.6,2 3.5,0.8 M3.6,0.8 V8" fill="none" stroke="#444" stroke-width="1.15"/></svg></span>6</div><div class="t" style="left:0;width:17px;text-align:center;top:410.44px;font-size:10px;color:#444;-webkit-text-stroke:0.15px #444"><span style="display:inline-block;position:relative;width:5.56px;height:8px"><svg width="6" height="8" style="left:0;top:0" viewBox="0 0 6 8"><path d="M0.9,2.6 Q2.6,2 3.5,0.8 M3.6,0.8 V8" fill="none" stroke="#444" stroke-width="1.15"/></svg></span>7</div><div class="t" style="left:0;width:17px;text-align:center;top:422.81px;font-size:10px;color:#444;-webkit-text-stroke:0.15px #444"><span style="display:inline-block;position:relative;width:5.56px;height:8px"><svg width="6" height="8" style="left:0;top:0" viewBox="0 0 6 8"><path d="M0.9,2.6 Q2.6,2 3.5,0.8 M3.6,0.8 V8" fill="none" stroke="#444" stroke-width="1.15"/></svg></span>8</div><div class="t" style="left:0;width:17px;text-align:center;top:435.19px;font-size:10px;color:#444;-webkit-text-stroke:0.15px #444"><span style="display:inline-block;position:relative;width:5.56px;height:8px"><svg width="6" height="8" style="left:0;top:0" viewBox="0 0 6 8"><path d="M0.9,2.6 Q2.6,2 3.5,0.8 M3.6,0.8 V8" fill="none" stroke="#444" stroke-width="1.15"/></svg></span>9</div><div class="t" style="left:0;width:17px;text-align:center;top:447.56px;font-size:10px;color:#444;-webkit-text-stroke:0.15px #444">20</div><div class="t" style="left:0;width:17px;text-align:center;top:459.94px;font-size:10px;color:#444;-webkit-text-stroke:0.15px #444">2<span style="display:inline-block;position:relative;width:5.56px;height:8px"><svg width="6" height="8" style="left:0;top:0" viewBox="0 0 6 8"><path d="M0.9,2.6 Q2.6,2 3.5,0.8 M3.6,0.8 V8" fill="none" stroke="#444" stroke-width="1.15"/></svg></span></div><div class="t" style="left:0;width:17px;text-align:center;top:472.31px;font-size:10px;color:#444;-webkit-text-stroke:0.15px #444">22</div><div class="t" style="left:18.73px;top:211.17px;width:57.42px;height:13px;overflow:hidden;padding-left:2.4px;font-size:10.2px;line-height:12px;color:#111"><span style="display:inline-block;transform:scaleX(0.941);transform-origin:0 50%;-webkit-text-stroke:0.12px #111">Date</span></div><div class="t" style="left:76.15px;top:211.17px;width:57.42px;height:13px;overflow:hidden;padding-left:2.4px;font-size:10.2px;line-height:12px;color:#111"><span style="display:inline-block;transform:scaleX(0.941);transform-origin:0 50%;-webkit-text-stroke:0.12px #111">Description</span></div><div class="t" style="left:133.57px;top:211.17px;width:57.42px;height:13px;overflow:hidden;padding-left:2.4px;font-size:10.2px;line-height:12px;color:#111"><span style="display:inline-block;transform:scaleX(0.941);transform-origin:0 50%;-webkit-text-stroke:0.12px #111">Amount</span></div><div class="t" style="left:18.73px;top:223.54px;width:57.42px;height:13px;overflow:hidden;padding-right:2.6px;text-align:right;font-size:10.2px;line-height:12px;color:#111"><span style="display:inline-block;transform:scaleX(0.941);transform-origin:100% 50%;-webkit-text-stroke:0.12px #111"><span style="display:inline-block;position:relative;width:5.671px;height:8.160px"><svg width="6.12" height="8.16" style="left:0;top:0" viewBox="0 0 6.120 8.160"><path d="M1.326,2.856 Q2.652,2.244 3.162,0.857 M3.346,0.857 V8.160" fill="none" stroke="#111" stroke-width="1.140"/></svg></span>0/02/20<span style="display:inline-block;position:relative;width:5.671px;height:8.160px"><svg width="6.12" height="8.16" style="left:0;top:0" viewBox="0 0 6.120 8.160"><path d="M1.326,2.856 Q2.652,2.244 3.162,0.857 M3.346,0.857 V8.160" fill="none" stroke="#111" stroke-width="1.140"/></svg></span>2</span></div><div class="t" style="left:76.15px;top:223.54px;width:57.42px;height:13px;overflow:hidden;padding-left:2.4px;font-size:10.2px;line-height:12px;color:#111"><span style="display:inline-block;transform:scaleX(0.941);transform-origin:0 50%;-webkit-text-stroke:0.12px #111">Accounting Fees</span></div><div class="t" style="left:133.57px;top:223.54px;width:57.42px;height:13px;overflow:hidden;padding-right:2.6px;text-align:right;font-size:10.2px;line-height:12px;color:#111"><span style="display:inline-block;transform:scaleX(0.941);transform-origin:100% 50%;-webkit-text-stroke:0.12px #111">-5235.94</span></div><div class="t" style="left:18.73px;top:235.92px;width:57.42px;height:13px;overflow:hidden;padding-right:2.6px;text-align:right;font-size:10.2px;line-height:12px;color:#111"><span style="display:inline-block;transform:scaleX(0.941);transform-origin:100% 50%;-webkit-text-stroke:0.12px #111"><span style="display:inline-block;position:relative;width:5.671px;height:8.160px"><svg width="6.12" height="8.16" style="left:0;top:0" viewBox="0 0 6.120 8.160"><path d="M1.326,2.856 Q2.652,2.244 3.162,0.857 M3.346,0.857 V8.160" fill="none" stroke="#111" stroke-width="1.140"/></svg></span>2/02/20<span style="display:inline-block;position:relative;width:5.671px;height:8.160px"><svg width="6.12" height="8.16" style="left:0;top:0" viewBox="0 0 6.120 8.160"><path d="M1.326,2.856 Q2.652,2.244 3.162,0.857 M3.346,0.857 V8.160" fill="none" stroke="#111" stroke-width="1.140"/></svg></span>2</span></div><div class="t" style="left:76.15px;top:235.92px;width:57.42px;height:13px;overflow:hidden;padding-left:2.4px;font-size:10.2px;line-height:12px;color:#111"><span style="display:inline-block;transform:scaleX(0.941);transform-origin:0 50%;-webkit-text-stroke:0.12px #111">Consulting Income</span></div><div class="t" style="left:133.57px;top:235.92px;width:57.42px;height:13px;overflow:hidden;padding-right:2.6px;text-align:right;font-size:10.2px;line-height:12px;color:#111"><span style="display:inline-block;transform:scaleX(0.941);transform-origin:100% 50%;-webkit-text-stroke:0.12px #111">2000.2<span style="display:inline-block;position:relative;width:5.671px;height:8.160px"><svg width="6.12" height="8.16" style="left:0;top:0" viewBox="0 0 6.120 8.160"><path d="M1.326,2.856 Q2.652,2.244 3.162,0.857 M3.346,0.857 V8.160" fill="none" stroke="#111" stroke-width="1.140"/></svg></span></span></div><div class="t" style="left:18.73px;top:248.29px;width:57.42px;height:13px;overflow:hidden;padding-right:2.6px;text-align:right;font-size:10.2px;line-height:12px;color:#111"><span style="display:inline-block;transform:scaleX(0.941);transform-origin:100% 50%;-webkit-text-stroke:0.12px #111"><span style="display:inline-block;position:relative;width:5.671px;height:8.160px"><svg width="6.12" height="8.16" style="left:0;top:0" viewBox="0 0 6.120 8.160"><path d="M1.326,2.856 Q2.652,2.244 3.162,0.857 M3.346,0.857 V8.160" fill="none" stroke="#111" stroke-width="1.140"/></svg></span>4/02/20<span style="display:inline-block;position:relative;width:5.671px;height:8.160px"><svg width="6.12" height="8.16" style="left:0;top:0" viewBox="0 0 6.120 8.160"><path d="M1.326,2.856 Q2.652,2.244 3.162,0.857 M3.346,0.857 V8.160" fill="none" stroke="#111" stroke-width="1.140"/></svg></span>2</span></div><div class="t" style="left:76.15px;top:248.29px;width:57.42px;height:13px;overflow:hidden;padding-left:2.4px;font-size:10.2px;line-height:12px;color:#111"><span style="display:inline-block;transform:scaleX(0.941);transform-origin:0 50%;-webkit-text-stroke:0.12px #111">Bank Charges</span></div><div class="t" style="left:133.57px;top:248.29px;width:57.42px;height:13px;overflow:hidden;padding-right:2.6px;text-align:right;font-size:10.2px;line-height:12px;color:#111"><span style="display:inline-block;transform:scaleX(0.941);transform-origin:100% 50%;-webkit-text-stroke:0.12px #111">-47.89</span></div><div class="t" style="left:18.73px;top:260.67px;width:57.42px;height:13px;overflow:hidden;padding-right:2.6px;text-align:right;font-size:10.2px;line-height:12px;color:#111"><span style="display:inline-block;transform:scaleX(0.941);transform-origin:100% 50%;-webkit-text-stroke:0.12px #111"><span style="display:inline-block;position:relative;width:5.671px;height:8.160px"><svg width="6.12" height="8.16" style="left:0;top:0" viewBox="0 0 6.120 8.160"><path d="M1.326,2.856 Q2.652,2.244 3.162,0.857 M3.346,0.857 V8.160" fill="none" stroke="#111" stroke-width="1.140"/></svg></span>6/02/20<span style="display:inline-block;position:relative;width:5.671px;height:8.160px"><svg width="6.12" height="8.16" style="left:0;top:0" viewBox="0 0 6.120 8.160"><path d="M1.326,2.856 Q2.652,2.244 3.162,0.857 M3.346,0.857 V8.160" fill="none" stroke="#111" stroke-width="1.140"/></svg></span>2</span></div><div class="t" style="left:76.15px;top:260.67px;width:57.42px;height:13px;overflow:hidden;padding-left:2.4px;font-size:10.2px;line-height:12px;color:#111"><span style="display:inline-block;transform:scaleX(0.941);transform-origin:0 50%;-webkit-text-stroke:0.12px #111">Training Income</span></div><div class="t" style="left:133.57px;top:260.67px;width:57.42px;height:13px;overflow:hidden;padding-right:2.6px;text-align:right;font-size:10.2px;line-height:12px;color:#111"><span style="display:inline-block;transform:scaleX(0.941);transform-origin:100% 50%;-webkit-text-stroke:0.12px #111">8906.29</span></div><svg width="768" height="480" style="left:0;top:0" viewBox="0 0 768 480"><rect x="18" y="209.3" width="58.45" height="13.15" fill="none" stroke="#1f6e3d" stroke-width="1.7"/><rect x="73.8" y="219.9" width="4.4" height="4.4" fill="#1f6e3d" stroke="#fff" stroke-width="0.6"/><rect x="74.1" y="220.2" width="3.8" height="3.8" fill="#1f6e3d"/></svg><svg width="768" height="480" style="left:0;top:0" viewBox="0 0 768 480"><defs><filter id="sh" x="-50%" y="-50%" width="200%" height="200%"><feGaussianBlur stdDeviation="1.8"/></filter><filter id="hb" x="-50%" y="-50%" width="200%" height="200%"><feGaussianBlur stdDeviation="0.9"/></filter></defs>
<path d="M215.9,355 H221.6 V364.5 H231.4 V370.9 H221.6 V380.3 H215.9 V370.9 H206 V364.5 H215.9 Z" fill="rgba(0,0,0,.3)" stroke="rgba(0,0,0,.3)" stroke-width="2" filter="url(#sh)" transform="translate(0,2)"/>
<path d="M215.9,355 H221.6 V364.5 H231.4 V370.9 H221.6 V380.3 H215.9 V370.9 H206 V364.5 H215.9 Z" fill="#fff" stroke="#fff" stroke-width="6" stroke-linejoin="round" filter="url(#hb)"/>
<path d="M215.9,355 H221.6 V364.5 H231.4 V370.9 H221.6 V380.3 H215.9 V370.9 H206 V364.5 H215.9 Z" fill="#fff" stroke="#fff" stroke-width="3.6" stroke-linejoin="round"/>
<path d="M215.9,355 H221.6 V364.5 H231.4 V370.9 H221.6 V380.3 H215.9 V370.9 H206 V364.5 H215.9 Z" fill="#fff" stroke="#151515" stroke-width="2.1" stroke-linejoin="round"/></svg>
</body></html>
